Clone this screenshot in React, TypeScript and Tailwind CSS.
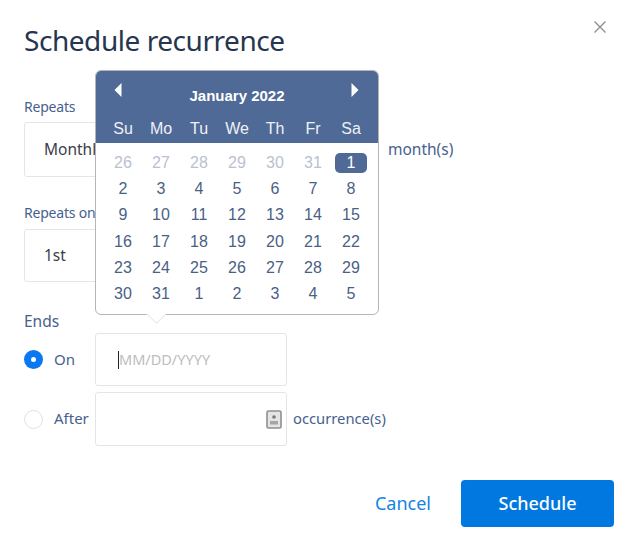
const weekdays = ["Su", "Mo", "Tu", "We", "Th", "Fr", "Sa"];

const days = [
  [26, 27, 28, 29, 30, 31, 1],
  [2, 3, 4, 5, 6, 7, 8],
  [9, 10, 11, 12, 13, 14, 15],
  [16, 17, 18, 19, 20, 21, 22],
  [23, 24, 25, 26, 27, 28, 29],
  [30, 31, 1, 2, 3, 4, 5],
];

function Calendar() {
  return (
    <div className="absolute left-[95px] top-[70px] z-10 w-[284px] font-['Liberation_Sans',sans-serif]">
      <div className="rounded-[6px] border border-[#b5b5b5] bg-white h-[245px] overflow-hidden">
        <div className="bg-[#4f6a96] text-white h-[72px] flex flex-col">
          <div className="relative h-[44px]">
            <svg className="absolute left-[18px] top-[12px]" width="8" height="14" viewBox="0 0 8 14">
              <path d="M7.5 0v14L0.5 7z" fill="#fff" />
            </svg>
            <svg className="absolute right-[19px] top-[12px]" width="8" height="14" viewBox="0 0 8 14">
              <path d="M0.5 0v14L7.5 7z" fill="#fff" />
            </svg>
            <p className="pt-[15px] text-center text-[15px] leading-[20px] font-bold">January 2022</p>
          </div>
          <div className="grid grid-cols-7 px-[8px]">
            {weekdays.map((d) => (
              <span key={d} className="text-center text-[16px] leading-[28px] text-[#eef1f6] font-medium">
                {d}
              </span>
            ))}
          </div>
        </div>
        <div className="px-[8px] pt-[7px]">
          {days.map((week, i) => (
            <div key={i} className="grid grid-cols-7 h-[26.2px] items-center">
              {week.map((day, j) => {
                const muted = i === 0 && j < 6;
                const selected = i === 0 && j === 6;
                return (
                  <span
                    key={j}
                    className={
                      selected
                        ? "mx-[3px] rounded-[5px] bg-[#4f6a96] text-white text-center text-[16px] leading-[20px] font-medium"
                        : muted
                          ? "text-center text-[16px] leading-[20px] text-[#b9c1cf]"
                          : "text-center text-[16px] leading-[20px] text-[#4a5f85]"
                    }
                  >
                    {day}
                  </span>
                );
              })}
            </div>
          ))}
        </div>
      </div>
      <div className="ml-[51px] -mt-[1px] h-[11px] w-[20px] overflow-hidden">
        <div className="mx-auto -mt-[8px] h-[15px] w-[15px] rotate-45 border border-[#e6e6e6] bg-white" />
      </div>
    </div>
  );
}

function Radio({ checked }: { checked?: boolean }) {
  return checked ? (
    <span className="flex h-[19px] w-[19px] items-center justify-center rounded-full bg-[#0a78f0]">
      <span className="h-[5px] w-[5px] rounded-full bg-white" />
    </span>
  ) : (
    <span className="h-[19px] w-[19px] rounded-full border border-[#e2e2e2] bg-white" />
  );
}

export default function App() {
  return (
    <div className="relative h-[543px] w-[638px] overflow-hidden bg-white font-['Noto_Sans',sans-serif] text-[#47618f]">
      <button className="absolute right-[31px] top-[20px] text-[#8c8c8c]">
        <svg width="14" height="14" viewBox="0 0 14 14" fill="none" stroke="currentColor" strokeWidth="1.3">
          <path d="M1.5 1.5l11 11M12.5 1.5l-11 11" />
        </svg>
      </button>

      <Calendar />

      <div className="px-[24px] pt-[21px]">
        <h1 className="text-[28px] leading-[38px] text-[#26364f] tracking-[-0.45px]">Schedule recurrence</h1>

        <p className="mt-[38px] text-[14px] leading-[20px] tracking-[-0.2px]">Repeats</p>
        <div className="mt-[5px] flex items-center">
          <div className="flex h-[55px] w-[150px] items-center rounded-[3px] border border-[#e5e5e5] pl-[19px] text-[15.5px] text-[#3a3f4a]">
            Monthly
          </div>
          <span className="ml-[214px] mt-[1px] text-[15.5px]">month(s)</span>
        </div>

        <p className="mt-[26px] text-[14px] leading-[20px] tracking-[-0.2px]">Repeats on</p>
        <div className="mt-[6px] flex h-[53px] w-[150px] items-center rounded-[3px] border border-[#e5e5e5] pl-[19px] text-[15.5px] text-[#3a3f4a]">
          1st
        </div>

        <p className="mt-[28px] text-[15.5px] leading-[22px]">Ends</p>

        <div className="mt-[1px] flex items-center">
          <div className="flex w-[71px] items-center">
            <Radio checked />
            <span className="ml-[11px] -mt-[1px] text-[15px]">On</span>
          </div>
          <div className="flex h-[53px] w-[192px] items-center rounded-[3px] border border-[#e5e5e5] pl-[22px] text-[14.5px] text-[#bdbdbd]">
            <span className="h-[18px] w-px bg-[#222]" />
            MM/DD/YYYY
          </div>
        </div>

        <div className="mt-[6px] flex items-center">
          <div className="flex w-[71px] items-center">
            <Radio />
            <span className="ml-[11px] -mt-[1px] text-[15px]">After</span>
          </div>
          <div className="flex h-[54px] w-[192px] items-center justify-end rounded-[3px] border border-[#e5e5e5] pr-[4px]">
            <svg width="16" height="19" viewBox="0 0 16 19">
              <rect x="1" y="1" width="14" height="17" rx="1.5" fill="#e4e4e4" stroke="#8f8f8f" strokeWidth="1.6" />
              <circle cx="8" cy="7" r="1.8" fill="#777" />
              <path d="M4 11h8v3.5H4z" fill="#a5a5a5" />
            </svg>
          </div>
          <span className="ml-[6px] -mt-[1px] text-[14.75px]">occurrence(s)</span>
        </div>

        <div className="mt-[34px] flex items-center justify-end w-[590px]">
          <span className="mr-[30px] text-[18px] text-[#1483e2]">Cancel</span>
          <button className="h-[47px] w-[153px] rounded-[4px] bg-[#0078e0] text-[18px] font-medium text-white">
            Schedule
          </button>
        </div>
      </div>
    </div>
  );
}
